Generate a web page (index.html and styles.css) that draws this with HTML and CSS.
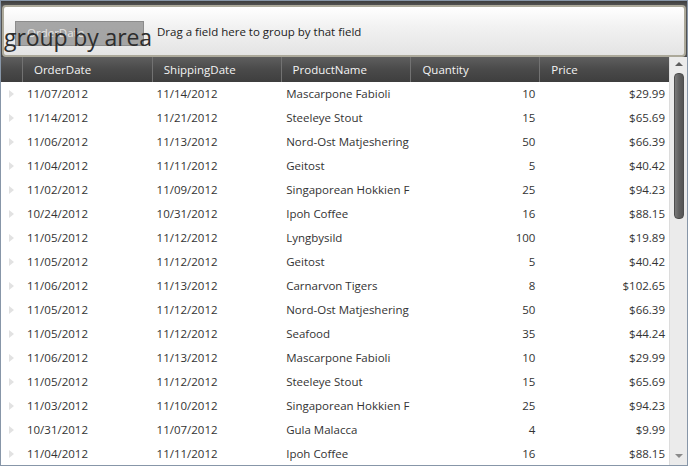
FILE: index.html
```html
<!DOCTYPE html>
<html>
<head>
<meta charset="utf-8">
<link rel="stylesheet" href="styles.css">
</head>
<body>
<div class="window">
  <div class="group-wrap">
    <div class="group-panel">
      <span class="group-hint">Drag a field here to group by that field</span>
      <div class="drag-cue">OrderDate</div>
      <div class="group-label">group by area</div>
    </div>
  </div>
  <div class="grid-body">
    <div class="grid-main">
      <div class="header">
        <div class="hcell ind"></div>
        <div class="hcell">OrderDate</div>
        <div class="hcell">ShippingDate</div>
        <div class="hcell">ProductName</div>
        <div class="hcell">Quantity</div>
        <div class="hcell">Price</div>
      </div>
      <div class="rows" id="rows"></div>
    </div>
    <div class="scrollbar">
      <div class="arrow up"></div>
      <div class="track"><div class="thumb"></div></div>
      <div class="arrow down"></div>
    </div>
  </div>
</div>
<script>
var data = [
["11/07/2012","11/14/2012","Mascarpone Fabioli","10","$29.99"],
["11/14/2012","11/21/2012","Steeleye Stout","15","$65.69"],
["11/06/2012","11/13/2012","Nord-Ost Matjeshering","50","$66.39"],
["11/04/2012","11/11/2012","Geitost","5","$40.42"],
["11/02/2012","11/09/2012","Singaporean Hokkien Fried Mee","25","$94.23"],
["10/24/2012","10/31/2012","Ipoh Coffee","16","$88.15"],
["11/05/2012","11/12/2012","Lyngbysild","100","$19.89"],
["11/05/2012","11/12/2012","Geitost","5","$40.42"],
["11/06/2012","11/13/2012","Carnarvon Tigers","8","$102.65"],
["11/05/2012","11/12/2012","Nord-Ost Matjeshering","50","$66.39"],
["11/05/2012","11/12/2012","Seafood","35","$44.24"],
["11/06/2012","11/13/2012","Mascarpone Fabioli","10","$29.99"],
["11/05/2012","11/12/2012","Steeleye Stout","15","$65.69"],
["11/03/2012","11/10/2012","Singaporean Hokkien Fried Mee","25","$94.23"],
["10/31/2012","11/07/2012","Gula Malacca","4","$9.99"],
["11/04/2012","11/11/2012","Ipoh Coffee","16","$88.15"]
];
var html = "";
data.forEach(function(r){
  html += '<div class="row"><div class="cell ind"><span class="tri"></span></div>' +
    '<div class="cell">'+r[0]+'</div><div class="cell">'+r[1]+'</div><div class="cell">'+r[2]+'</div>' +
    '<div class="cell num">'+r[3]+'</div><div class="cell num">'+r[4]+'</div></div>';
});
document.getElementById("rows").innerHTML = html;
</script>
</body>
</html>
```
FILE: styles.css
```css
* { box-sizing: border-box; }
html, body { margin: 0; padding: 0; background: #fff; }
body {
  font-family: "Open Sans", "Noto Sans", sans-serif;
  font-size: 11.5px;
  color: #333;
}
.window {
  width: 688px;
  height: 466px;
  border: 1px solid #8796a8;
  display: flex;
  flex-direction: column;
  overflow: hidden;
  background: #fff;
}
.group-wrap {
  background: linear-gradient(#3e3e3e, #5a5a5a 6px, #4a4a4a);
  padding: 4px 1px 0 1px;
  height: 56px;
  flex: none;
}
.group-panel {
  position: relative;
  height: 52px;
  border: 2px solid #aca99a;
  border-radius: 4px;
  background: linear-gradient(#ffffff, #f2f2f2 40%, #e4e4e4);
  display: flex;
  align-items: center;
  padding-left: 153px;
}
.group-hint {
  color: #222;
  white-space: nowrap;
}
.drag-cue {
  position: absolute;
  left: 11px;
  top: 14px;
  width: 129px;
  height: 25px;
  background: rgba(140,140,140,0.75);
  border: 1px solid #8c8c8c;
  color: #e4e4e4;
  padding-left: 11px;
  line-height: 22px;
  white-space: nowrap;
}
.group-label {
  position: absolute;
  left: 0;
  top: 15px;
  font-size: 23px;
  line-height: 30px;
  color: #2e2e2e;
  white-space: nowrap;
  letter-spacing: -0.1px;
}
.grid-body {
  flex: 1;
  display: flex;
  min-height: 0;
}
.grid-main {
  width: 668px;
  display: flex;
  flex-direction: column;
}
.header {
  height: 25px;
  display: flex;
  background: linear-gradient(#5e5e5e, #4a4a4a 50%, #3e3e3e);
  flex: none;
}
.hcell {
  width: 130px;
  color: #f4f4f4;
  line-height: 25px;
  padding-left: 11px;
  border-left: 1px solid #727272;
  white-space: nowrap;
}
.hcell.ind {
  width: 21px;
  border-left: none;
  padding: 0;
}
.hcell:nth-child(3), .hcell:nth-child(5) { width: 129px; }
.rows { flex: 1; overflow: hidden; }
.row {
  height: 24px;
  display: flex;
}
.cell {
  width: 130px;
  line-height: 24px;
  padding-left: 5px;
  padding-right: 4px;
  white-space: nowrap;
  overflow: hidden;
  color: #333;
}
.cell:nth-child(4) { width: 129px; padding-right: 1px; }
.cell.ind {
  width: 21px;
  padding: 0;
  display: flex;
  align-items: center;
  padding-left: 8px;
}
.tri {
  width: 0;
  height: 0;
  border-top: 4px solid transparent;
  border-bottom: 4px solid transparent;
  border-left: 5px solid #e2e2e2;
}
.cell.num { text-align: right; }
.scrollbar {
  width: 18px;
  background: #ebebeb;
  border-left: 1px solid #dcdcdc;
  display: flex;
  flex-direction: column;
  align-items: center;
}
.arrow {
  width: 0;
  height: 0;
  border-left: 4px solid transparent;
  border-right: 4px solid transparent;
  margin: 6px 0;
}
.arrow.up { border-bottom: 4px solid #5e5e5e; margin-top: 5px; }
.arrow.down { border-top: 4px solid #8a8a8a; margin-bottom: 7px; }
.track {
  flex: 1;
  width: 100%;
  display: flex;
  justify-content: center;
}
.thumb {
  width: 10px;
  height: 146px;
  margin-top: 1px;
  border-radius: 4px;
  background: linear-gradient(90deg, #7a7a7a, #616161 50%, #555);
  border: 1px solid #4e4e4e;
}
```
